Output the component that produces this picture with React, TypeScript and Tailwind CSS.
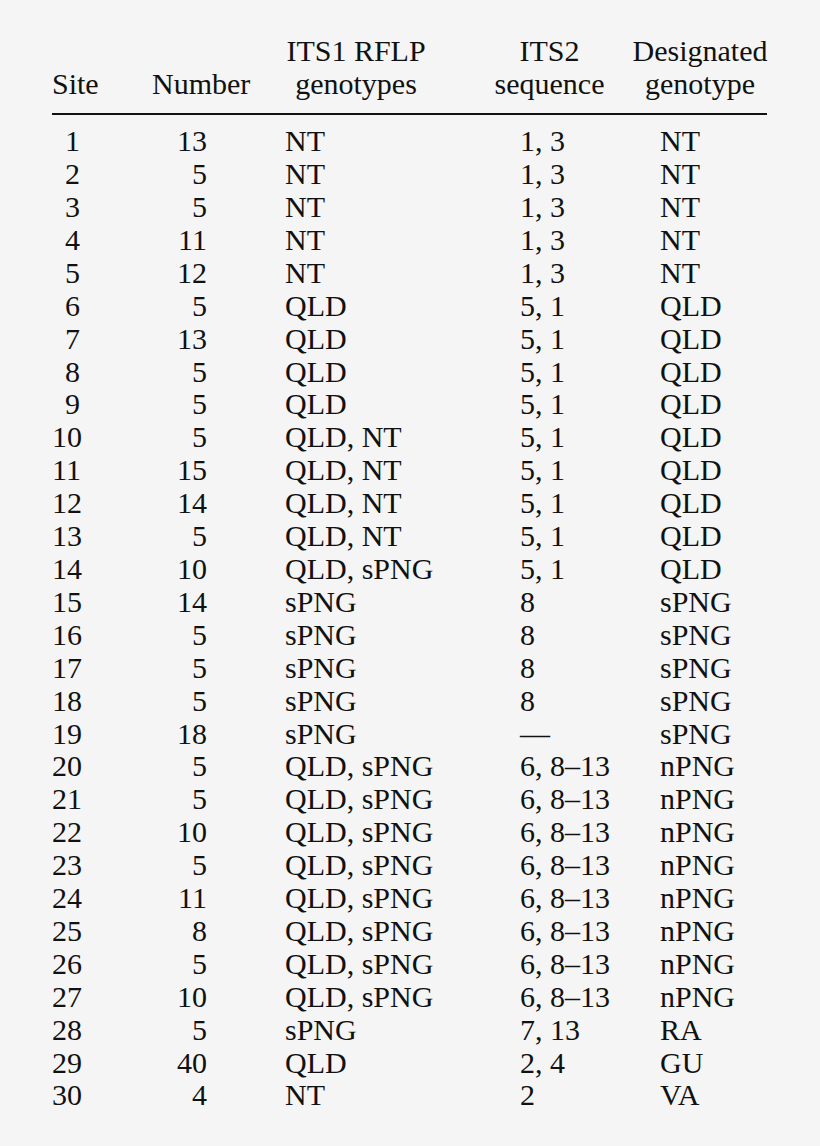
const rows: [string, string, string, string, string][] = [
  ["1", "13", "NT", "1, 3", "NT"],
  ["2", "5", "NT", "1, 3", "NT"],
  ["3", "5", "NT", "1, 3", "NT"],
  ["4", "11", "NT", "1, 3", "NT"],
  ["5", "12", "NT", "1, 3", "NT"],
  ["6", "5", "QLD", "5, 1", "QLD"],
  ["7", "13", "QLD", "5, 1", "QLD"],
  ["8", "5", "QLD", "5, 1", "QLD"],
  ["9", "5", "QLD", "5, 1", "QLD"],
  ["10", "5", "QLD, NT", "5, 1", "QLD"],
  ["11", "15", "QLD, NT", "5, 1", "QLD"],
  ["12", "14", "QLD, NT", "5, 1", "QLD"],
  ["13", "5", "QLD, NT", "5, 1", "QLD"],
  ["14", "10", "QLD, sPNG", "5, 1", "QLD"],
  ["15", "14", "sPNG", "8", "sPNG"],
  ["16", "5", "sPNG", "8", "sPNG"],
  ["17", "5", "sPNG", "8", "sPNG"],
  ["18", "5", "sPNG", "8", "sPNG"],
  ["19", "18", "sPNG", "—", "sPNG"],
  ["20", "5", "QLD, sPNG", "6, 8–13", "nPNG"],
  ["21", "5", "QLD, sPNG", "6, 8–13", "nPNG"],
  ["22", "10", "QLD, sPNG", "6, 8–13", "nPNG"],
  ["23", "5", "QLD, sPNG", "6, 8–13", "nPNG"],
  ["24", "11", "QLD, sPNG", "6, 8–13", "nPNG"],
  ["25", "8", "QLD, sPNG", "6, 8–13", "nPNG"],
  ["26", "5", "QLD, sPNG", "6, 8–13", "nPNG"],
  ["27", "10", "QLD, sPNG", "6, 8–13", "nPNG"],
  ["28", "5", "sPNG", "7, 13", "RA"],
  ["29", "40", "QLD", "2, 4", "GU"],
  ["30", "4", "NT", "2", "VA"],
];

export default function App() {
  return (
    <div
      className="w-[820px] h-[1146px] bg-[#f5f5f5] text-[#111] text-[30px] leading-[32.9px] whitespace-nowrap overflow-hidden"
      style={{ fontFamily: '"Liberation Serif", "Times New Roman", serif' }}
    >
      <div className="ml-[52px] w-[715px] pt-[35.4px]">
        {/* header */}
        <div className="flex items-end pb-[12px] border-b-2 border-[#111]">
          <div className="w-[100px]">Site</div>
          <div className="w-[100px]">Number</div>
          <div className="w-[208px] flex flex-col items-center">
            <span>ITS1 RFLP</span>
            <span>genotypes</span>
          </div>
          <div className="w-[179px] flex flex-col items-center">
            <span>ITS2</span>
            <span>sequence</span>
          </div>
          <div className="w-[122px] flex flex-col items-center">
            <span>Designated</span>
            <span>genotype</span>
          </div>
        </div>

        {/* body */}
        <div className="pt-[10px]">
          {rows.map(([site, num, its1, its2, des]) => (
            <div key={site} className="flex">
              <div className="w-[28px] text-right">{site}</div>
              <div className="w-[127px] text-right">{num}</div>
              <div className="ml-[78px] w-[235px]">{its1}</div>
              <div className="w-[140px]">{its2}</div>
              <div className="flex-1">{des}</div>
            </div>
          ))}
        </div>
      </div>
    </div>
  );
}
